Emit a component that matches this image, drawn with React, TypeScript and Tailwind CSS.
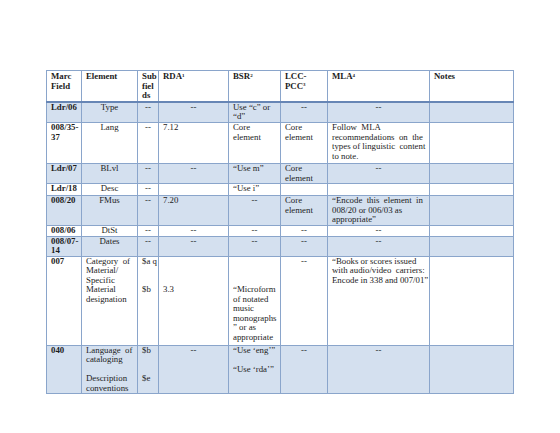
import React from "react";

type Cell = {
  lines: string[];
  align?: "left" | "center";
};

const c = (lines: string[], align: "left" | "center" = "left"): Cell => ({ lines, align });

const dash = c(["--"], "center");
const blank = c([""]);

const rows: { h: string; fill: boolean; cells: Cell[] }[] = [
  {
    h: "h-[21px]",
    fill: true,
    cells: [c(["Ldr/06"]), c(["Type"], "center"), dash, dash, c(["Use “c” or", "“d”"]), dash, dash, blank],
  },
  {
    h: "h-[41px]",
    fill: false,
    cells: [
      c(["008/35-", "37"]),
      c(["Lang"], "center"),
      dash,
      c(["7.12"]),
      c(["Core", "element"]),
      c(["Core", "element"]),
      c(["Follow  MLA", "recommendations  on  the", "types of linguistic  content", "to note."]),
      blank,
    ],
  },
  {
    h: "h-[18px]",
    fill: true,
    cells: [c(["Ldr/07"]), c(["BLvl"], "center"), dash, dash, c(["“Use m”"]), c(["Core", "element"]), dash, blank],
  },
  {
    h: "h-[12px]",
    fill: false,
    cells: [c(["Ldr/18"]), c(["Desc"], "center"), dash, blank, c(["“Use i”"]), blank, blank, blank],
  },
  {
    h: "h-[30px]",
    fill: true,
    cells: [
      c(["008/20"]),
      c(["FMus"], "center"),
      dash,
      c(["7.20"]),
      dash,
      c(["Core", "element"]),
      c(["“Encode  this  element  in", "008/20 or 006/03 as", "appropriate”"]),
      blank,
    ],
  },
  {
    h: "h-[10px]",
    fill: false,
    cells: [c(["008/06"]), c(["DtSt"], "center"), dash, dash, dash, dash, dash, blank],
  },
  {
    h: "h-[19px]",
    fill: true,
    cells: [c(["008/07-", "14"]), c(["Dates"], "center"), dash, dash, dash, dash, dash, blank],
  },
  {
    h: "h-[89px]",
    fill: false,
    cells: [
      c(["007"]),
      c(["Category  of", "Material/", "Specific", "Material", "designation"]),
      c(["$a q", "", "", "$b"]),
      c(["", "", "", "3.3"]),
      c(["", "", "", "“Microform", "of notated", "music", "monographs", "” or as", "appropriate"]),
      dash,
      c(["“Books or scores issued", "with audio/video  carriers:", "Encode in 338 and 007/01”"]),
      blank,
    ],
  },
  {
    h: "h-[46px]",
    fill: true,
    cells: [
      c(["040"]),
      c(["Language  of", "cataloging", "", "Description", "conventions"]),
      c(["$b", "", "", "$e"]),
      dash,
      c(["“Use ‘eng’”", "", "“Use ‘rda’”"]),
      dash,
      dash,
      blank,
    ],
  },
];

const widths = ["w-[35px]", "w-[56px]", "w-[21px]", "w-[70px]", "w-[52px]", "w-[47px]", "w-[102px]", "w-[84px]"];

function Lines({ cell, bold }: { cell: Cell; bold?: boolean }) {
  return (
    <>
      {cell.lines.map((l, i) => (
        <div
          key={i}
          className={
            "h-[9.5px] whitespace-pre " +
            (bold ? "font-bold " : "") +
            (cell.align === "center" ? "text-center" : "")
          }
        >
          {l || "\u00a0"}
        </div>
      ))}
    </>
  );
}

export default function App() {
  return (
    <div className="w-[560px] h-[433px] bg-white pt-[70px] pl-[46px] font-['Liberation_Serif',serif] text-[8.8px] leading-[9.5px] text-[#1c1c1c]">
      <table className="table-fixed border-collapse w-[467px] border border-[#8aa5cb]">
        <colgroup>
          {widths.map((w, i) => (
            <col key={i} className={w} />
          ))}
        </colgroup>
        <thead>
          <tr className="h-[30px] bg-white">
            {[
              <>Marc<br />Field</>,
              <>Element</>,
              <>Sub<br />fiel<br />ds</>,
              <>RDA<sup className="text-[5px]">1</sup></>,
              <>BSR<sup className="text-[5px]">2</sup></>,
              <>LCC-<br />PCC<sup className="text-[5px]">3</sup></>,
              <>MLA<sup className="text-[5px]">4</sup></>,
              <>Notes</>,
            ].map((h, i) => (
              <th
                key={i}
                className="align-top text-left font-bold px-[4px] pt-[1px] border border-[#8aa5cb] border-b-2 border-b-[#6786b5] leading-[9.5px]"
              >
                {h}
              </th>
            ))}
          </tr>
        </thead>
        <tbody>
          {rows.map((r, ri) => (
            <tr key={ri} className={r.h + " " + (r.fill ? "bg-[#d4e0ef]" : "bg-white")}>
              {r.cells.map((cell, ci) => (
                <td key={ci} className="align-top px-[4px] p-0 border border-[#8aa5cb] overflow-hidden">
                  <Lines cell={cell} bold={ci === 0} />
                </td>
              ))}
            </tr>
          ))}
        </tbody>
      </table>
    </div>
  );
}
